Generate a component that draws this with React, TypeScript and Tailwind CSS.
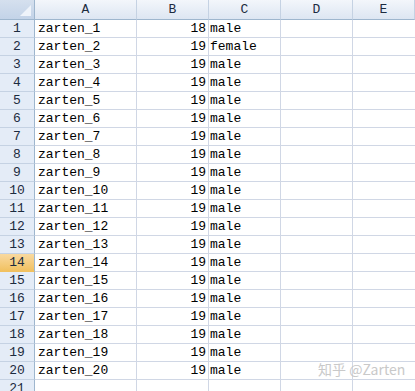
import React from 'react'

const cols = ['A', 'B', 'C', 'D', 'E']

// one row per person, the last row is empty
const rows = Array.from({ length: 21 }, (_, i) => {
  const n = i + 1
  if (n === 21) return { n, name: '', age: '', sex: '' }
  return {
    n,
    name: `zarten_${n}`,
    age: n === 1 ? '18' : '19',
    sex: n === 2 ? 'female' : 'male',
  }
})

const font = { fontFamily: '"Liberation Mono", "Noto Sans CJK SC", monospace' }

export default function App() {
  return (
    <div className="relative w-[415px] h-[391px] overflow-hidden bg-white text-[13px] text-black" style={font}>
      <div className="grid grid-cols-[35px_102px_72px_72px_72px_1fr]">
        {/* Corner */}
        <div className="h-[20px] border-r border-b border-[#9eb6ce] bg-gradient-to-b from-[#d5e0ee] to-[#c3d3e8] relative">
          <svg className="absolute right-[3px] bottom-[3px]" width="11" height="11" viewBox="0 0 11 11">
            <polygon points="11,0 11,11 0,11" fill="#eef3fa" />
          </svg>
        </div>
        {cols.map((c) => (
          <div
            key={c}
            className="h-[20px] flex items-center justify-center border-r border-b border-r-[#c5d2e3] border-b-[#9eb6ce] bg-gradient-to-b from-[#f3f6fb] to-[#dde6f2] text-[#1c2b40]"
          >
            {c}
          </div>
        ))}

        {rows.map((r) => (
          <React.Fragment key={r.n}>
            <div
              className={
                r.n === 14
                  ? 'h-[18px] flex items-center justify-center border-r border-b border-r-[#9eb6ce] border-b-[#f1c15f] bg-gradient-to-b from-[#f9d99f] to-[#f1c15f] text-[#1c2b40]'
                  : 'h-[18px] flex items-center justify-center border-r border-b border-r-[#9eb6ce] border-b-[#c5d2e3] bg-[#e4ecf7] text-[#1c2b40]'
              }
            >
              {r.n}
            </div>
            <div className="h-[18px] flex items-center pl-[3px] border-r border-b border-[#d0d7e5] whitespace-nowrap">
              {r.name}
            </div>
            <div className="h-[18px] flex items-center justify-end pr-[2px] border-r border-b border-[#d0d7e5]">
              {r.age}
            </div>
            <div className="h-[18px] flex items-center pl-[1px] border-r border-b border-[#d0d7e5]">
              {r.sex}
            </div>
            <div className="h-[18px] border-r border-b border-[#d0d7e5]" />
            <div className="h-[18px] border-b border-[#d0d7e5]" />
          </React.Fragment>
        ))}
      </div>

      {/* watermark */}
      <div
        className="absolute left-[318px] top-[362px] text-[14px] leading-none text-[#c4c4c4] opacity-90 whitespace-nowrap"
        style={{ fontFamily: '"Noto Sans CJK SC", "Noto Sans", sans-serif' }}
      >
        知乎 @Zarten
      </div>
    </div>
  )
}
